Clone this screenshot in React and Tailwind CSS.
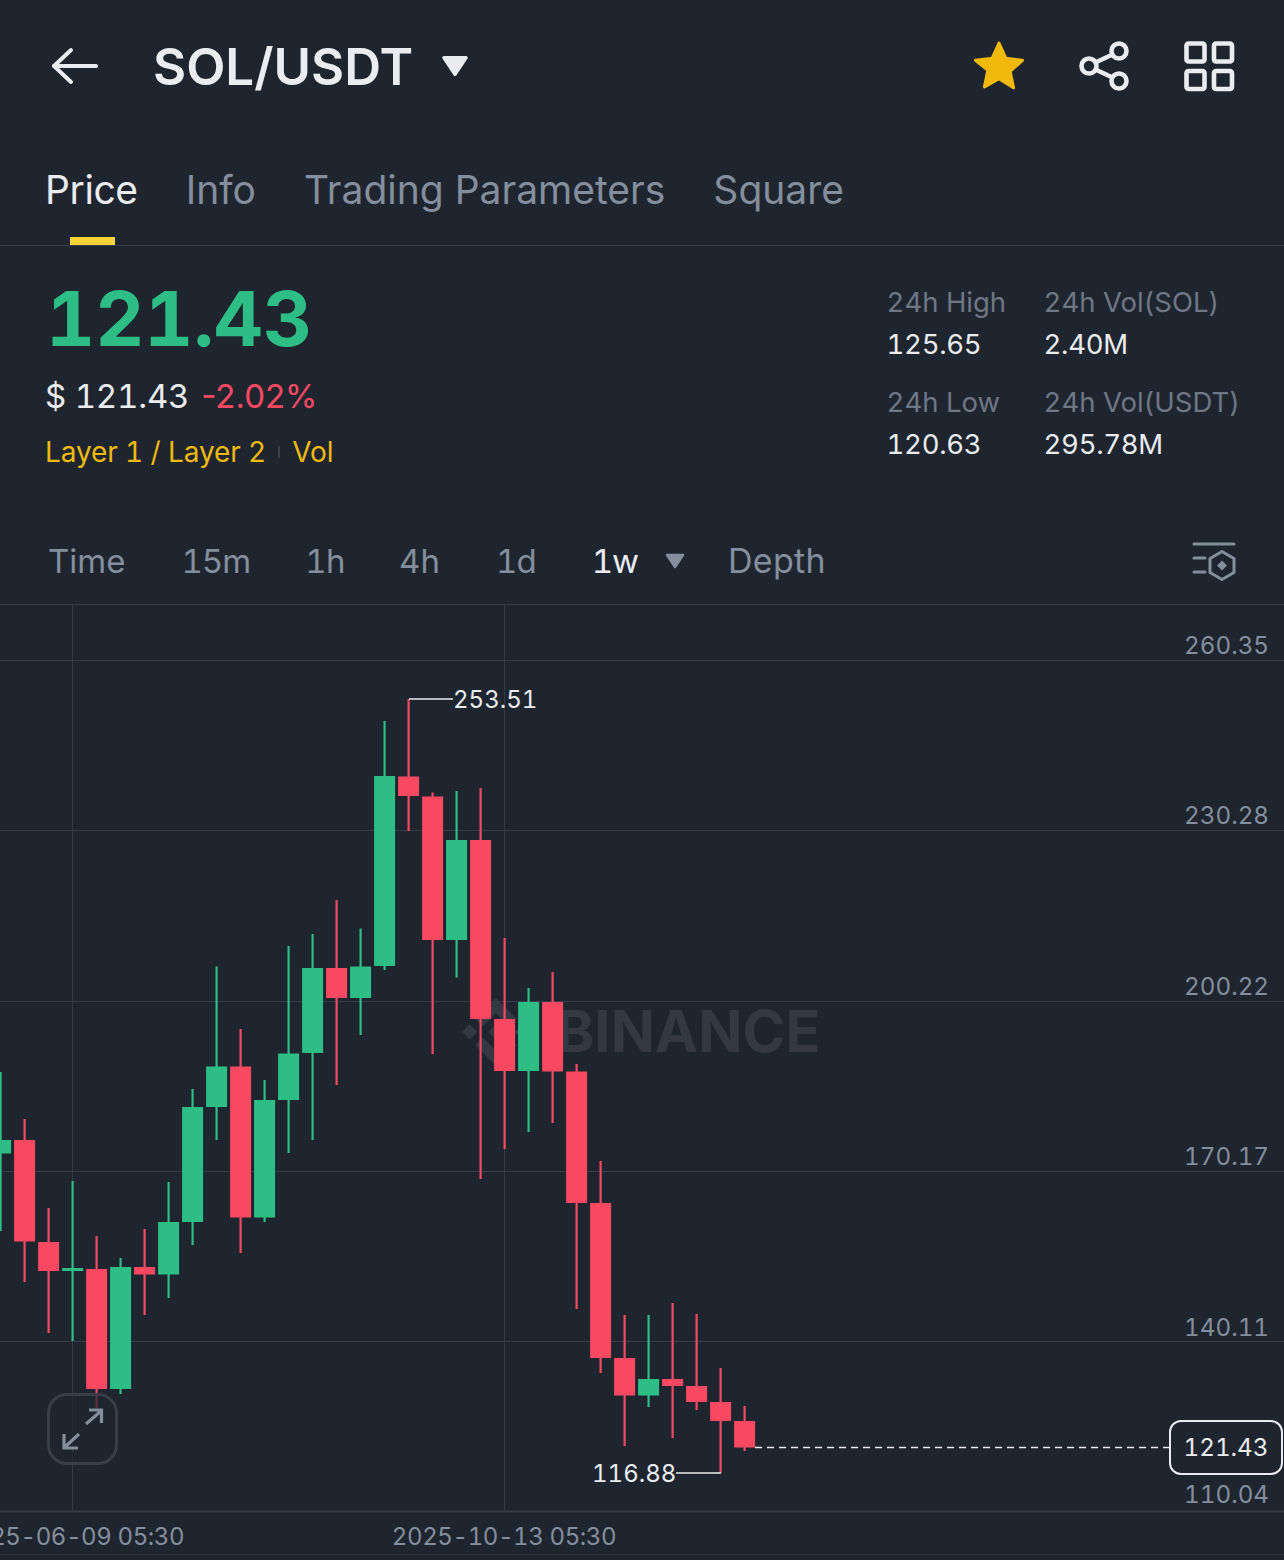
import { Fragment } from 'react';

const GREEN = '#2ebd85';
const RED = '#f84960';

// index, wick top, wick bottom, body top, body bottom, up?
const candles = [
  [0, 1072, 1231, 1140, 1153.5, 1],
  [1, 1119, 1282, 1140, 1241.5, 0],
  [2, 1208, 1333, 1242, 1271, 0],
  [3, 1181, 1341, 1268, 1271, 1],
  [4, 1236, 1408, 1269, 1389, 0],
  [5, 1258, 1394, 1267, 1389, 1],
  [6, 1229, 1315, 1267, 1274.5, 0],
  [7, 1182, 1298, 1222, 1274.5, 1],
  [8, 1089, 1245, 1107, 1222, 1],
  [9, 966.5, 1140, 1066.5, 1107, 1],
  [10, 1029, 1253, 1066.5, 1217.5, 0],
  [11, 1080, 1222, 1100, 1217.5, 1],
  [12, 946, 1153, 1053.5, 1100, 1],
  [13, 934, 1140, 968, 1053, 1],
  [14, 900, 1085, 968, 998, 0],
  [15, 928.5, 1035, 966.5, 998, 1],
  [16, 721, 970, 776, 966, 1],
  [17, 699, 831, 776.5, 796, 0],
  [18, 792.5, 1054, 796.5, 940, 0],
  [19, 791, 977.5, 840, 940, 1],
  [20, 788, 1179, 840, 1019, 0],
  [21, 938, 1149, 1019, 1071, 0],
  [22, 988, 1132, 1002, 1071, 1],
  [23, 972, 1123, 1002, 1071.5, 0],
  [24, 1064, 1309, 1071.5, 1203, 0],
  [25, 1161, 1373, 1203, 1358, 0],
  [26, 1315, 1446, 1358, 1395.5, 0],
  [27, 1315, 1407, 1379, 1395.5, 1],
  [28, 1303, 1438, 1379, 1386, 0],
  [29, 1314, 1410, 1386, 1402, 0],
  [30, 1368, 1473, 1402, 1421, 0],
  [31, 1406, 1451, 1421, 1447.5, 0],
];

const gridRows = [660, 830, 1001, 1171, 1341];
const axisLabels = [
  ['260.35', 'top-[26px]'],
  ['230.28', 'top-[196px]'],
  ['200.22', 'top-[367px]'],
  ['170.17', 'top-[537px]'],
  ['140.11', 'top-[708px]'],
  ['110.04', 'top-[875px]'],
];

const tabs = ['Price', 'Info', 'Trading Parameters', 'Square'];

function BackIcon() {
  return (
    <svg width="48" height="38" viewBox="0 0 48 38" fill="none" stroke="#eaecef" strokeWidth="4" strokeLinecap="round" strokeLinejoin="round">
      <path d="M45 19H3" />
      <path d="M20 3 3 19l17 16" />
    </svg>
  );
}

function Caret({ w, h, color }) {
  return (
    <svg width={w} height={h} viewBox="0 0 20 16" fill={color} stroke={color} strokeWidth="2.500" strokeLinejoin="round">
      <path d="M2 2h16L10 14z" />
    </svg>
  );
}

function StarIcon() {
  return (
    <svg width="54" height="52" viewBox="0 0 52 50" fill="#f0b90b" stroke="#f0b90b" strokeWidth="3" strokeLinejoin="round">
      <path d="M26 3l6.6 14.7 16 1.8-11.9 10.6 3.3 15.9L26 37.1 12 45l3.3-15.900L3.400 19.500l16-1.800z" />
    </svg>
  );
}

function ShareIcon() {
  return (
    <svg width="52" height="52" viewBox="0 0 52 52" fill="none" stroke="#eaecef" strokeWidth="4.600">
      <circle cx="40" cy="11" r="7.500" />
      <circle cx="40" cy="41" r="7.500" />
      <circle cx="10" cy="26" r="7.500" />
      <path d="M16.500 22.500 33.500 14.500M16.500 29.500 33.500 37.500" />
    </svg>
  );
}

function GridIcon() {
  return (
    <svg width="52" height="52" viewBox="0 0 52 52" fill="none" stroke="#eaecef" strokeWidth="4.600" strokeLinejoin="round">
      <rect x="3.500" y="3.500" width="18" height="18" rx="2" />
      <rect x="31" y="3.500" width="18" height="18" rx="2" />
      <rect x="3.500" y="31" width="18" height="18" rx="2" />
      <rect x="31" y="31" width="18" height="18" rx="2" />
    </svg>
  );
}

function ChartSettingsIcon() {
  return (
    <svg width="44" height="40" viewBox="0 0 44 40" fill="none" stroke="#848e9c" strokeWidth="3" strokeLinecap="round">
      <path d="M2 2h40M2 16h11M2 30h11" />
      <path d="M30 9.500l12 7v14l-12 7-12-7v-14z" strokeLinejoin="round" />
      <path d="M30 18.500l5 5-5 5-5-5z" fill="#848e9c" stroke="none" />
    </svg>
  );
}

function ExpandIcon() {
  return (
    <svg width="42" height="42" viewBox="0 0 42 42" fill="none" stroke="#848e9c" strokeWidth="3.200">
      <path d="M24 16 39 3M27 2h12.500v13" />
      <path d="M17 26 3 39M2 26v14h14" />
    </svg>
  );
}

function Stat({ label, value }) {
  return (
    <div className="flex flex-col">
      <span className="text-[27.5px] leading-[36px] text-[#6f7785]">{label}</span>
      <span className="mt-[6px] text-[27.5px] leading-[36px] tracking-[-0.3px] text-[#eaecef]">{value}</span>
    </div>
  );
}

function Chart() {
  return (
    <div className="relative h-[955px] w-full overflow-hidden">
      <svg className="block" width="1284" height="955" viewBox="0 605 1284 955">
        {/* grid */}
        {gridRows.map((y) => (
          <line key={y} x1="0" x2="1284" y1={y + 0.5} y2={y + 0.5} stroke="#363c47" strokeWidth="1" />
        ))}
        <line x1="72.500" x2="72.500" y1="605" y2="1511" stroke="#363c47" />
        <line x1="504.500" x2="504.500" y1="605" y2="1511" stroke="#363c47" />
        <line x1="0" x2="1284" y1="1511.500" y2="1511.500" stroke="#363c47" strokeWidth="2" />
        <line x1="0" x2="1284" y1="1554.500" y2="1554.500" stroke="#2b313c" />

        {/* watermark */}
        <g fill="#333842">
          <path
            transform="translate(462 998) scale(2.830)"
            d="M16.624 13.9202l2.7175 2.7154-7.353 7.353-7.353-7.352 2.7175-2.7164 4.6355 4.6595 4.6356-4.6595zm4.6366-4.6366L24 12l-2.7154 2.7164L18.5682 12l2.6924-2.7164zm-9.272.001l2.7163 2.6914-2.7164 2.7174v-.001L9.2721 12l2.7164-2.7154zm-9.2722-.001L5.4088 12l-2.6914 2.6924L0 12l2.7164-2.7164zM11.9885.0115l7.353 7.329-2.7174 2.7154-4.6356-4.6356-4.6355 4.6595-2.7174-2.7154 7.353-7.353z"
          />
          <text x="556" y="1052" fontFamily="Inter, sans-serif" fontWeight="700" fontSize="58">BINANCE</text>
        </g>

        {/* candles */}
        {candles.map(([i, wt, wb, bt, bb, up]) => {
          const cx = i * 24 + 0.6;
          const color = up ? GREEN : RED;
          return (
            <Fragment key={i}>
              <rect x={cx - 1.1} y={wt} width="2.200" height={wb - wt} fill={color} />
              <rect x={cx - 10.5} y={bt} width="21" height={bb - bt} fill={color} />
            </Fragment>
          );
        })}

        {/* high / low leaders and last price */}
        <path d="M409 699H453M676 1473H721" stroke="#eaecef" strokeWidth="1.500" fill="none" />
        <line x1="755" x2="1169" y1="1447.500" y2="1447.500" stroke="#eaecef" strokeWidth="1.500" strokeDasharray="7 5" />
      </svg>

      {axisLabels.map(([v, top]) => (
        <span key={v} className={`absolute right-[15px] ${top} text-[24.2px] leading-[30px] text-[#848e9c] tabular-nums`}>{v}</span>
      ))}

      <span className="absolute left-[453px] top-[80px] text-[24px] leading-[30px] text-[#eaecef] tabular-nums">253.51</span>
      <span className="absolute left-[592px] top-[854px] text-[24px] leading-[30px] text-[#eaecef] tabular-nums">116.88</span>

      <div className="absolute left-[1169px] top-[815px] flex h-[55px] w-[114px] items-center justify-center rounded-[12px] border-2 border-[#eaecef] bg-[#1f252f] pt-px text-[24.2px] text-[#eaecef] tabular-nums">
        121.43
      </div>

      <div className="absolute left-[47px] top-[788px] flex h-[72px] w-[71px] items-center justify-center rounded-[20px] border-[3px] border-[#393e49] bg-[#1f252f]/70">
        <ExpandIcon />
      </div>

      <span className="absolute left-[72px] top-[917px] -translate-x-1/2 whitespace-nowrap text-[24px] leading-[30px] tracking-[-0.4px] text-[#848e9c] tabular-nums">2025-06-09 05:30</span>
      <span className="absolute left-[504px] top-[917px] -translate-x-1/2 whitespace-nowrap text-[24px] leading-[30px] tracking-[-0.4px] text-[#848e9c] tabular-nums">2025-10-13 05:30</span>
    </div>
  );
}

export default function App() {
  return (
    <div className="h-[1560px] w-[1284px] overflow-hidden bg-[#1f252f] font-['Inter',sans-serif]">
      {/* header */}
      <div className="flex h-[132px] items-center pl-[51px] pr-[49px]">
        <BackIcon />
        <h1 className="ml-[54px] text-[51px] font-semibold leading-none text-[#eaecef]">SOL/USDT</h1>
        <div className="ml-[27px]"><Caret w={30} h={22} color="#eaecef" /></div>
        <div className="ml-auto flex items-center">
          <StarIcon />
          <div className="ml-[53px]"><ShareIcon /></div>
          <div className="ml-[52px]"><GridIcon /></div>
        </div>
      </div>

      {/* tabs */}
      <div className="flex h-[114px] gap-[48px] border-b border-[#363c47] pl-[45px]">
        {tabs.map((tab, i) => (
          <div key={tab} className="relative pt-[33px]">
            <span className={`text-[39px] leading-[50px] ${i === 0 ? 'tracking-[-0.4px] text-[#eaecef]' : 'text-[#848e9c]'}`}>{tab}</span>
            {i === 0 && <div className="absolute bottom-0 left-[25px] h-[8px] w-[45px] bg-[#fcd535]" />}
          </div>
        ))}
      </div>

      {/* price stats */}
      <div className="flex h-[274px] justify-between pl-[46px] pr-[44px] pt-[26px]">
        <div>
          <div className="text-[76px] font-bold leading-[92px] text-[#2ebd85] tabular-nums">121.43</div>
          <div className="-ml-px mt-[10px] flex items-center gap-[12px] text-[33px] leading-[44px]">
            <span className="tracking-[-0.2px] text-[#eaecef] tabular-nums">$ 121.43</span>
            <span className="text-[#f84960]">-2.02%</span>
          </div>
          <div className="-ml-px mt-[16px] flex items-center text-[28px] leading-[36px] tracking-[-0.1px] text-[#f0b90b] tabular-nums">
            <span>Layer 1 / Layer 2</span>
            <span className="mx-[12px] h-[12px] w-[2px] bg-[#3a3f4a]" />
            <span>Vol</span>
          </div>
        </div>
        <div className="grid grid-cols-[157px_auto] content-start gap-y-[22px] pt-[12px] tabular-nums">
          <Stat label="24h High" value="125.65" />
          <Stat label="24h Vol(SOL)" value="2.40M" />
          <Stat label="24h Low" value="120.63" />
          <Stat label="24h Vol(USDT)" value="295.78M" />
        </div>
      </div>

      {/* intervals */}
      <div className="flex h-[85px] items-start border-b border-[#363c47] pl-[48px] pr-[48px] pt-[19px] text-[33px] leading-[44px] text-[#848e9c] tabular-nums">
        <span>Time</span>
        <span className="ml-[56px] tracking-[-1px]">15m</span>
        <span className="ml-[55px] tracking-[-0.5px]">1h</span>
        <span className="ml-[54px]">4h</span>
        <span className="ml-[56px] tracking-[-1px]">1d</span>
        <span className="ml-[56px] tracking-[-1px] text-[#eaecef]">1w</span>
        <span className="ml-[26px] mt-[14px]"><Caret w={22} h={16} color="#848e9c" /></span>
        <span className="ml-[42px] text-[34px] tracking-[0.3px]">Depth</span>
        <span className="ml-auto mt-[3px]"><ChartSettingsIcon /></span>
      </div>

      <Chart />
    </div>
  );
}
